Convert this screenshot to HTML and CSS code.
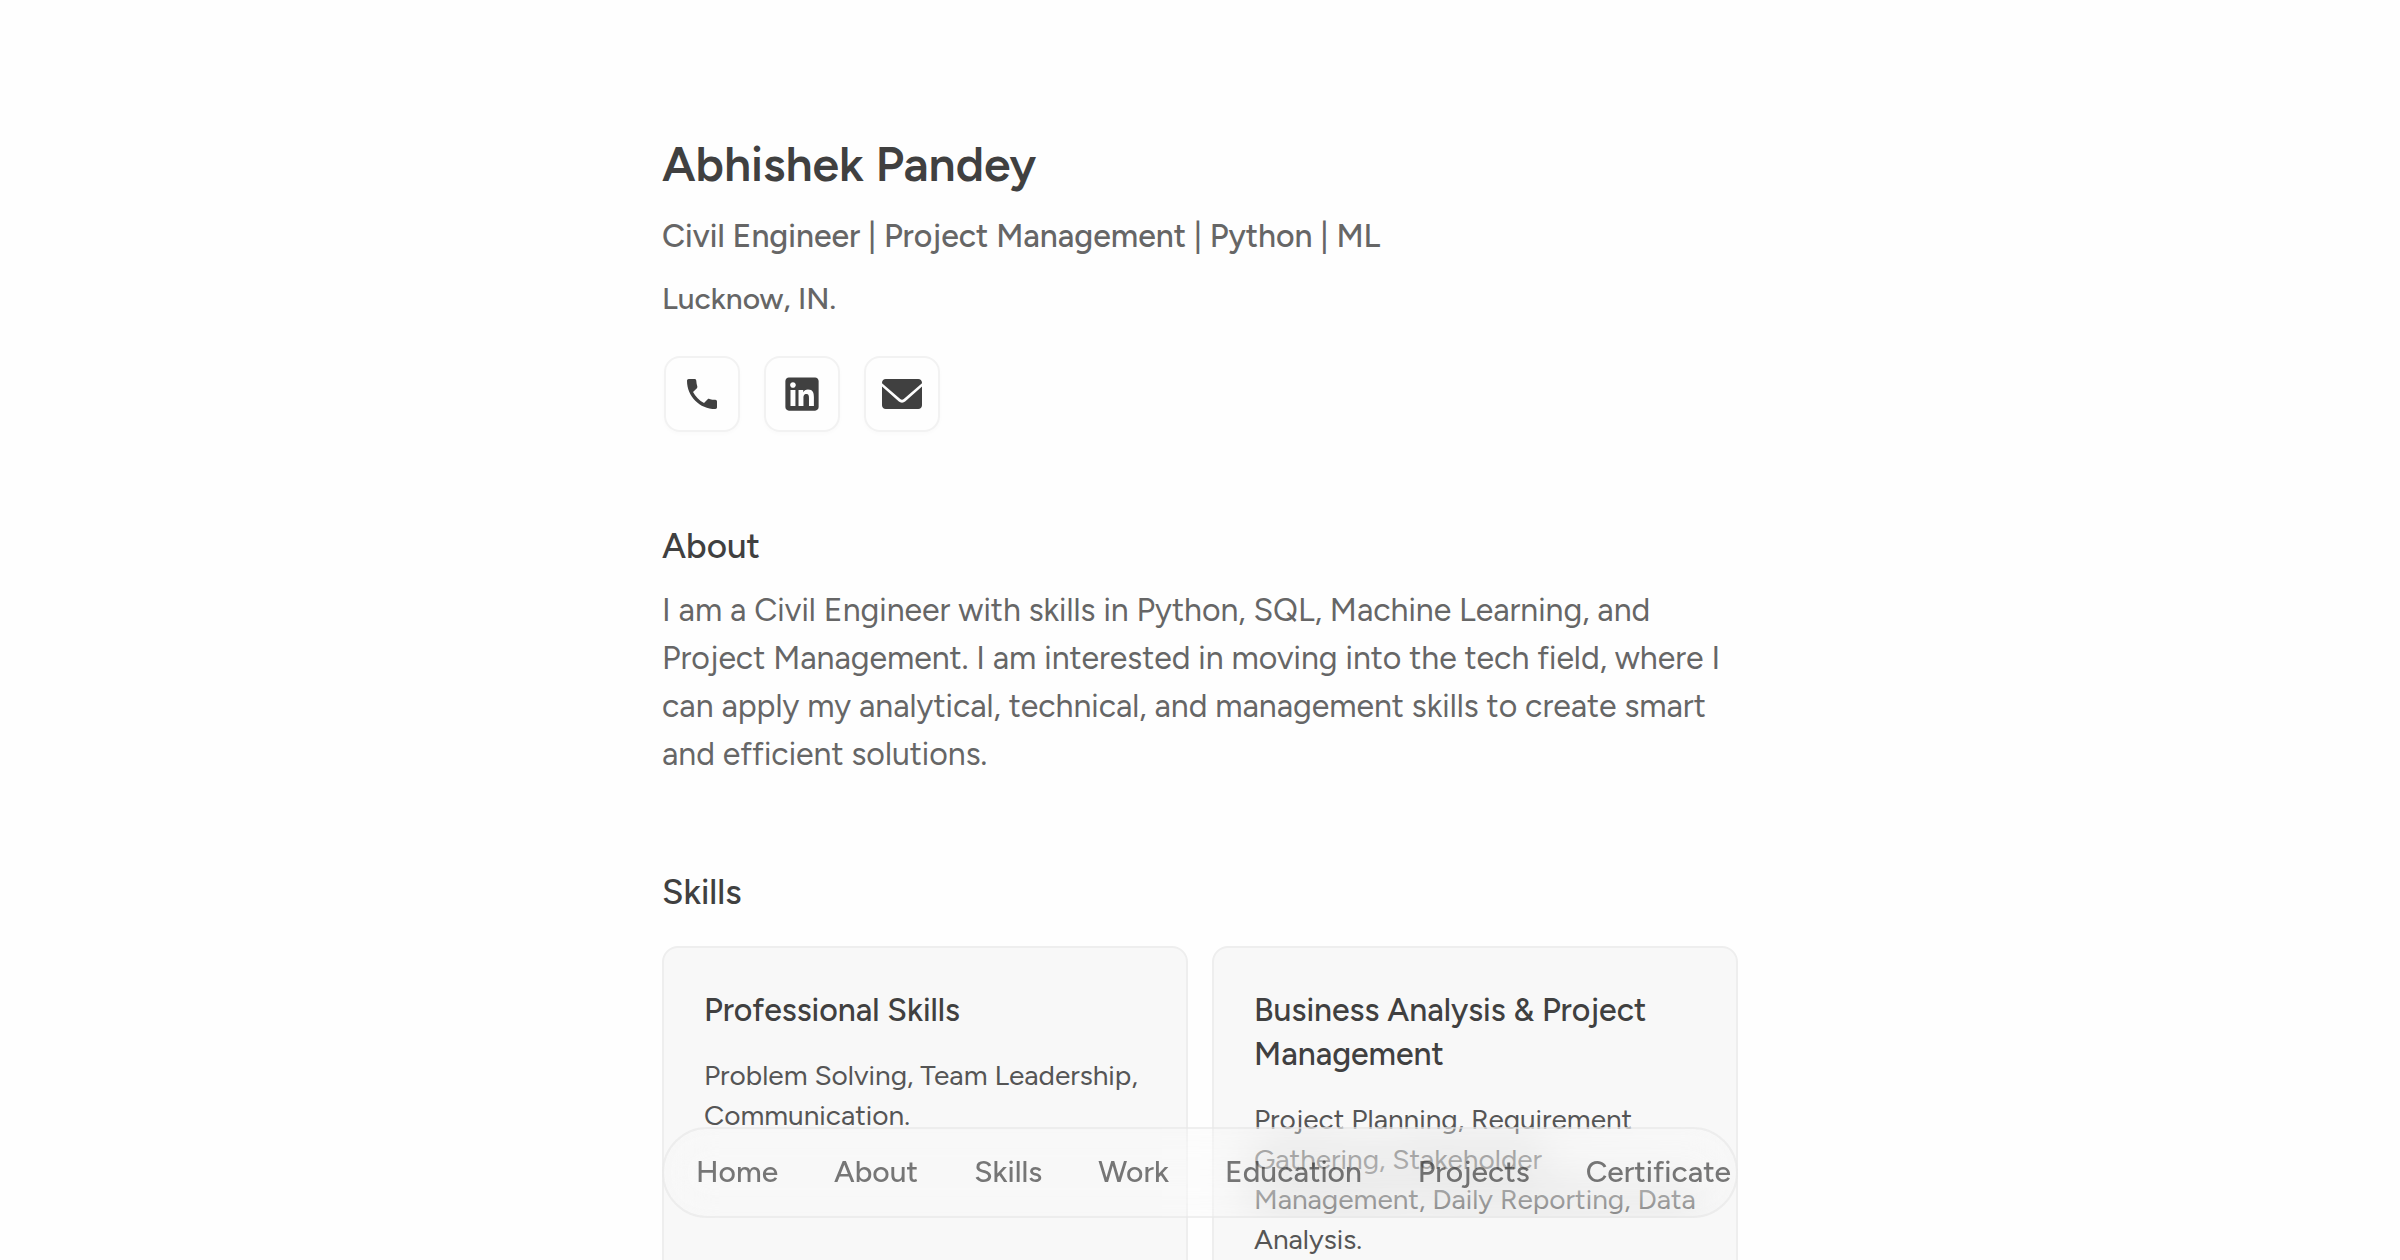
FILE: index.html
```html
<!DOCTYPE html>
<html lang="en">
<head>
<meta charset="UTF-8">
<meta name="viewport" content="width=device-width, initial-scale=1.0">
<title>Abhishek Pandey</title>
<link rel="stylesheet" href="styles.css">
</head>
<body>
  <main class="page">
    <header class="intro" id="home">
      <h1>Abhishek Pandey</h1>
      <p class="role">Civil Engineer | Project Management | Python | ML</p>
      <p class="location">Lucknow, IN.</p>
      <div class="socials">
        <a class="social" href="#phone" aria-label="Phone">
          <svg viewBox="0 0 24 24" width="40" height="40"><path d="M6.540 5h-2.500C4 3.400 4 3 4 3h3.600c.5 0 .9.4.95.900.1 1.300.3 2.500.65 3.650.1.350 0 .7-.25.95L6.620 10.790c1.440 2.830 3.760 5.140 6.590 6.590l2.200-2.200c.27-.27.67-.36 1.020-.24 1.120.37 2.330.57 3.570.57.55 0 1 .45 1 1V20c0 .55-.45 1-1 1-9.390 0-17-7.610-17-17 0-.55.45-1 1-1z"/></svg>
        </a>
        <a class="social" href="#linkedin" aria-label="LinkedIn">
          <svg viewBox="0 0 448 512" width="38" height="38"><path d="M400 32H48C21.500 32 0 53.500 0 80v352c0 26.500 21.500 48 48 48h352c26.500 0 48-21.500 48-48V80c0-26.500-21.500-48-48-48zM135.400 416H69V202.200h66.500V416zm-33.200-243c-21.300 0-38.500-17.300-38.500-38.500S80.900 96 102.200 96c21.200 0 38.500 17.300 38.500 38.500 0 21.300-17.200 38.500-38.500 38.500zm282.100 243h-66.400V312c0-24.800-.5-56.700-34.500-56.700-34.600 0-39.900 27-39.900 54.900V416h-66.400V202.200h63.700v29.200h.9c8.900-16.800 30.600-34.500 62.900-34.500 67.200 0 79.700 44.300 79.700 101.900V416z"/></svg>
        </a>
        <a class="social" href="#email" aria-label="Email">
          <svg viewBox="0 0 512 512" width="40" height="40"><path d="M48 64h416c26.500 0 48 21.500 48 48v6L278 320c-12 11-32 11-44 0L0 118v-6c0-26.500 21.500-48 48-48zM0 160l212 190c25 23 63 23 88 0l212-190v240c0 26.500-21.500 48-48 48H48c-26.500 0-48-21.500-48-48z"/></svg>
        </a>
      </div>
    </header>

    <section class="section" id="about">
      <h2>About</h2>
      <p class="about-text">I am a Civil Engineer with skills in Python, SQL, Machine Learning, and Project Management. I am interested in moving into the tech field, where I can apply my analytical, technical, and management skills to create smart and efficient solutions.</p>
    </section>

    <section class="section" id="skills">
      <h2>Skills</h2>
      <div class="cards">
        <article class="card">
          <h3>Professional Skills</h3>
          <p>Problem Solving, Team Leadership, Communication.</p>
        </article>
        <article class="card">
          <h3>Business Analysis &amp; Project Management</h3>
          <p>Project Planning, Requirement Gathering, Stakeholder Management, Daily Reporting, Data Analysis.</p>
        </article>
      </div>
    </section>
  </main>

  <nav class="navbar">
    <a href="#home">Home</a>
    <a href="#about">About</a>
    <a href="#skills">Skills</a>
    <a href="#work">Work</a>
    <a href="#education">Education</a>
    <a href="#projects">Projects</a>
    <a href="#certificate">Certificate</a>
  </nav>
</body>
</html>
```
FILE: styles.css
```css
* { margin:0; padding:0; box-sizing:border-box; }
body { font-family: Figtree, Lato, 'Open Sans', sans-serif; background:#fefefe; color:#404040; height:100vh; overflow:hidden; }
.page { max-width:1076px; margin:0 auto; padding-top:132px; }

h1 { font-size:48px; font-weight:600; line-height:64px; }
.role { font-size:32px; font-weight:500; line-height:48px; margin-top:16px; color:#666; }
.location { font-size:30px; font-weight:500; line-height:48px; margin-top:15px; color:#666; }
.socials { display:flex; gap:24px; margin-top:33px; padding-left:2px; }
.social { width:76px; height:76px; border:2px solid #f2f2f2; border-radius:16px; display:flex; align-items:center; justify-content:center; box-shadow:0 2px 4px rgba(0,0,0,.02); }
.social svg { fill:#404040; }

.section { margin-top:90px; }
h2 { font-size:35px; font-weight:500; line-height:48px; }
.about-text { font-size:32px; line-height:48px; margin-top:16px; color:#666; }

.cards { display:grid; grid-template-columns:1fr 1fr; gap:24px; margin-top:30px; }
.card { min-height:360px; padding:40px; border:2px solid #eee; border-radius:16px; background:#f8f8f8; }
.card h3 { font-size:32px; font-weight:500; line-height:44px; }
.card p { font-size:28px; line-height:40px; margin-top:23px; color:#555; }

.navbar { position:fixed; left:0; right:0; bottom:42px; width:100%; max-width:1076px; height:91px; margin:0 auto; padding:0 32px 2px; display:flex; align-items:center; gap:56px; overflow:hidden; border:2px solid #e6e6e6; border-radius:46px; background:rgba(255,255,255,.1); backdrop-filter:blur(24px); opacity:.6; }
.navbar a { color:#202020; font-size:30px; font-weight:500; line-height:40px; text-decoration:none; white-space:nowrap; }
```
